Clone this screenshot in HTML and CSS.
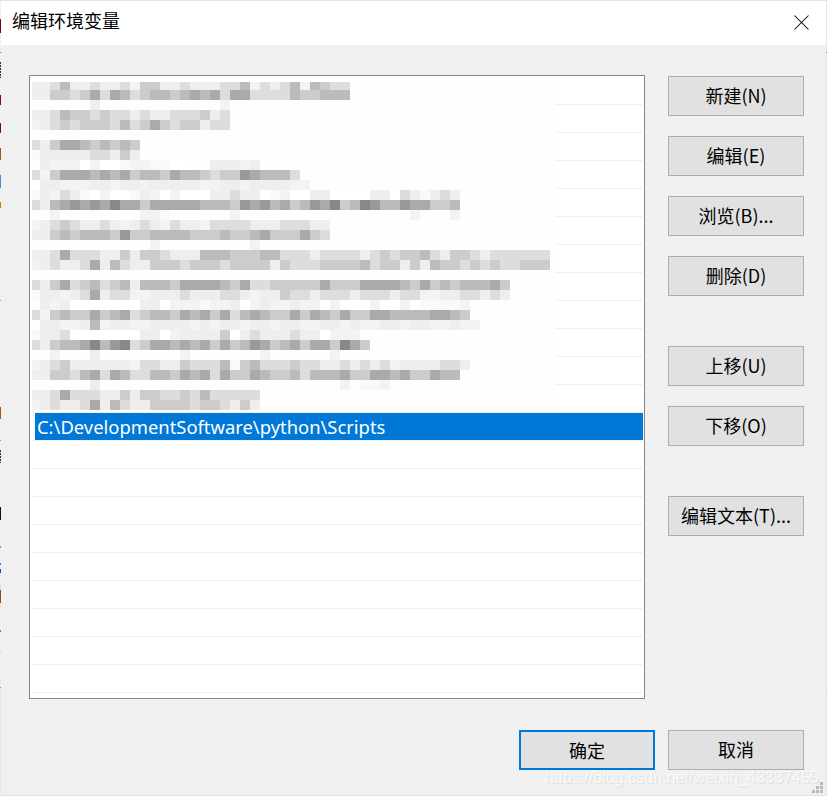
FILE: index.html
```html
<!DOCTYPE html>
<html lang="zh-CN">
<head>
<meta charset="utf-8">
<title>编辑环境变量</title>
<link rel="stylesheet" href="styles.css">
</head>
<body>
<div class="frame">
  <div class="strip strip-left"></div>
  <main class="dialog">
    <header class="titlebar">
      <h1 class="title">编辑环境变量</h1>
      <svg class="close" width="15" height="15" viewBox="0 0 15 15" aria-label="关闭"><path d="M0.5 0.5 14.5 14.5M14.5 0.5 0.5 14.5" fill="none" stroke="#000" stroke-width="1.05"/></svg>
    </header>
    <section class="content">
      <div class="list">
        <div class="row"></div><div class="row"></div><div class="row"></div><div class="row"></div>
        <div class="row"></div><div class="row"></div><div class="row"></div><div class="row"></div>
        <div class="row"></div><div class="row"></div><div class="row"></div><div class="row"></div>
        <div class="row"><div class="item-selected">C:\DevelopmentSoftware\python\Scripts</div></div>
        <div class="row"></div><div class="row"></div><div class="row"></div><div class="row"></div>
        <div class="row"></div><div class="row"></div><div class="row"></div><div class="row"></div>
        <div class="row"></div><div class="row"></div>
        <div class="mosaic" id="mosaic"></div>
      </div>
      <div class="actions">
        <div class="group">
          <button class="btn">新建(N)</button>
          <button class="btn">编辑(E)</button>
          <button class="btn">浏览(B)...</button>
          <button class="btn">删除(D)</button>
        </div>
        <div class="group">
          <button class="btn">上移(U)</button>
          <button class="btn">下移(O)</button>
        </div>
        <div class="group">
          <button class="btn">编辑文本(T)...</button>
        </div>
      </div>
    </section>
    <footer class="footer">
      <button class="btn btn-default">确定</button>
      <button class="btn">取消</button>
    </footer>
    <div class="watermark">https://blog.csdn.net/weixin_43337455</div>
    <svg class="grip" width="11" height="11" viewBox="0 0 11 11" aria-hidden="true"><path d="M8 0h3v3H8zM4 4h3v3H4zM8 4h3v3H8zM0 8h3v3H0zM4 8h3v3H4zM8 8h3v3H8z" fill="#b9b9b9"/></svg>
  </main>
  <div class="strip strip-right"></div>
</div>
<script src="mosaic.js"></script>
</body>
</html>
```

FILE: styles.css
```css
* { box-sizing: border-box; }
html, body { margin: 0; padding: 0; }
body {
  width: 827px;
  height: 796px;
  overflow: hidden;
  background: #f0f0f0;
  font-family: "Noto Sans CJK SC", "Noto Sans", sans-serif;
  color: #000;
}
.frame {
  display: flex;
  height: 796px;
}
.strip {
  flex: 0 0 1px;
}
.strip-left {
  background: linear-gradient(to bottom,
    #e6e6e6 0 1px, #f0f0f0 1px 19px, #6e0a0a 19px 33px, #f0f0f0 33px 52px, #888 52px 53px, #f0f0f0 53px 62px,
    #333 62px 64px, #ddd 64px 65px, #333 65px 67px, #ddd 67px 68px, #333 68px 70px, #ddd 70px 71px,
    #333 71px 73px, #ddd 73px 74px, #333 74px 76px, #ddd 76px 77px, #333 77px 78px,
    #f0f0f0 78px 95px, #7a0c14 95px 105px, #f0f0f0 105px 123px, #7a0c14 123px 133px,
    #f0f0f0 133px 148px, #a8560c 148px 160px, #f0f0f0 160px 175px, #3b8fe0 175px 188px, #f0f0f0 188px 202px,
    #c77a20 202px 208px, #f0f0f0 208px 300px, #999 300px 301px, #f0f0f0 301px 407px, #a65a10 407px 419px,
    #f0f0f0 419px 440px, #999 440px 441px, #f0f0f0 441px 450px,
    #333 450px 452px, #ddd 452px 453px, #333 453px 455px, #ddd 455px 456px, #333 456px 458px, #ddd 458px 459px,
    #333 459px 461px, #ddd 461px 462px, #333 462px 463px, #f0f0f0 463px 507px,
    #111 507px 520px, #f0f0f0 520px 546px, #d9822b 546px 548px, #f0f0f0 548px 563px, #2f86dc 563px 565px,
    #f0f0f0 565px 569px, #0a4fb0 569px 573px, #f0f0f0 573px 583px, #e2e2e2 583px 590px, #9a4a10 590px 603px,
    #e2e2e2 603px 610px, #f0f0f0 610px 630px,
    #3b8fe0 630px 632px, #f0f0f0 632px 650px, #f2ec9a 650px 654px, #f0f0f0 654px 678px, #f2ec9a 678px 682px,
    #f0f0f0 682px 687px, #999 687px 688px, #e8e8e8 688px);
}
.strip-right {
  background: linear-gradient(to bottom,
    #e6e6e6 0 52px, #777 52px 53px, #e6e6e6 53px 690px, #bbb 690px 691px, #e6e6e6 691px);
}
.dialog {
  position: relative;
  flex: 1;
  display: flex;
  flex-direction: column;
  border-top: 1px solid #e3e3e3;
  border-bottom: 1px solid #e3e3e3;
  background: #f0f0f0;
}
.titlebar {
  flex: 0 0 44px;
  display: flex;
  align-items: center;
  justify-content: space-between;
  padding: 0 17px 0 11px;
  background: #fff;
}
.title {
  margin: 0;
  padding-bottom: 6px;
  font-size: 18px;
  font-weight: 400;
  line-height: 38px;
}
.close {
  display: block;
  margin-top: -1px;
}
.content {
  display: flex;
  gap: 23px;
  padding: 30px 0 0 28px;
}
.list {
  position: relative;
  flex: 0 0 616px;
  height: 624px;
  padding-top: 1px;
  overflow: hidden;
  border: 1px solid #82878f;
  background: #fff;
}
.row {
  height: 28px;
  margin: 0 1px;
  border-bottom: 1px solid #f0f0f0;
  padding-left: 4px;
}
.item-selected {
  height: 27px;
  padding-left: 2px;
  overflow: hidden;
  background: #0078d7;
  color: #fff;
  font-family: "Noto Sans", sans-serif;
  font-size: 18.4px;
  line-height: 28px;
  white-space: nowrap;
}
.mosaic {
  position: absolute;
  left: 2px;
  top: 6px;
  width: 524px;
  height: 328px;
  background: #fefefe;
}
.mosaic-row {
  display: flex;
  height: 10px;
}
.mosaic-row:first-child { height: 8px; }
.mosaic-cell {
  flex: 0 0 10px;
}
.mosaic-cell:first-child { flex-basis: 8px; }
.actions {
  display: flex;
  flex-direction: column;
  gap: 50px;
  padding-top: 1px;
}
.group {
  display: flex;
  flex-direction: column;
  gap: 20px;
}
.btn {
  display: block;
  width: 136px;
  height: 40px;
  padding: 0 0 2px;
  border: 1px solid #adadad;
  border-radius: 0;
  background: #e1e1e1;
  color: #000;
  font-family: "Noto Sans CJK SC", "Noto Sans", sans-serif;
  font-size: 18px;
  line-height: 36px;
}
.btn-default {
  padding-bottom: 4px;
  border: 2px solid #0078d7;
}
.footer {
  display: flex;
  justify-content: flex-end;
  gap: 13px;
  margin-top: 31px;
  padding-right: 22px;
}
.watermark {
  position: absolute;
  left: 544px;
  top: 766px;
  font-family: "Liberation Sans", sans-serif;
  font-size: 16.1px;
  line-height: 20px;
  color: rgba(255, 255, 255, 0.75);
  text-shadow: 1px 1px 1px rgba(150, 150, 150, 0.2);
  white-space: nowrap;
}
.grip {
  position: absolute;
  right: 3px;
  bottom: 2px;
}
```

FILE: mosaic.js
```js
// Pixelated (redacted) entries: one character per 10px block of grey.
var ROWS = [
  "eedbeedeedfcceedeeeddbfdedbfbcdd",
  "eeccdcadabdcbbcbabadaaddddbccbbb",
  "......e............f",
  "eedbccdcddedeedddced",
  "fedcdcccdbdcacdccedd",
  "",
  "decaabcbcbc",
  "geeeeeddece",
  ".efffwfwwgffggww..eeefe",
  "dfcaaababacbbcabbcdcc9abbbd",
  ".eefffeefeefeeeeeffeefeeeeff",
  "gefdegwfwwgefwfwwweedeewgfwweewwwweewdegede",
  "deba9a9a8aacaaaaabbbc9a9bacb9a8cb89bb9aaccb",
  "..f........ffg......f.................f...f",
  "fedcdeedefedefdeefddddeeedddee",
  "eecbcbbbc9ccbbbbcccbccbacccacd",
  "............f.........f",
  "eedadddeececcdeeebbbcccbbdddeddddedcdccbdeccdedddddd",
  "fedeedaebdeecccdcccdccccecdddccccbdccecebccdcdcddccc",
  "",
  "decadcbdcbebbbcaaaabcaddcccccacccaaaabcacbcbbbac",
  "geefedaeddffeeedeeeddefeecddedddedddeddffeeddede",
  ".efewwwwwwweewfffgffewfeffeffwfwwwfwwfwggggf",
  "dfcbccacbadcbbcabacadbabcca" + "cabcacca" + "abbbbaabc",
  ".eeffebfeeffeeeefefeefeefeeffeefeffeefeeffeff",
  "geedwwwwwwweewfeeeecwedeeedeewfff",
  "decbba8b98dcaababacacb9acbacaac8ac",
  "..f...e........f.......f......f",
  "fedceeeeeefddeecdddbgcbdddcddeedededfeeeedde",
  "eeccdbadabddbbcabadaccabccbdbbbaccaabaccabb",
  "......e........................f.ggf",
  "eedadddeececcddcdbddddd",
  "fedeedaebdeeccccdccdece"
];

var HEX = "0123456789abcde";
function shade(ch) {
  if (ch === "w") return "#fff";
  if (ch === "f") return "#f3f3f3";
  if (ch === "g") return "#f9f9f9";
  if (HEX.indexOf(ch) < 0) return "";
  var h = ch + ch;
  return "#" + h + h + h;
}

var box = document.getElementById("mosaic");
ROWS.forEach(function (text) {
  var row = document.createElement("div");
  row.className = "mosaic-row";
  text.split("").forEach(function (ch) {
    var cell = document.createElement("span");
    cell.className = "mosaic-cell";
    cell.style.background = shade(ch);
    row.appendChild(cell);
  });
  box.appendChild(row);
});
```
